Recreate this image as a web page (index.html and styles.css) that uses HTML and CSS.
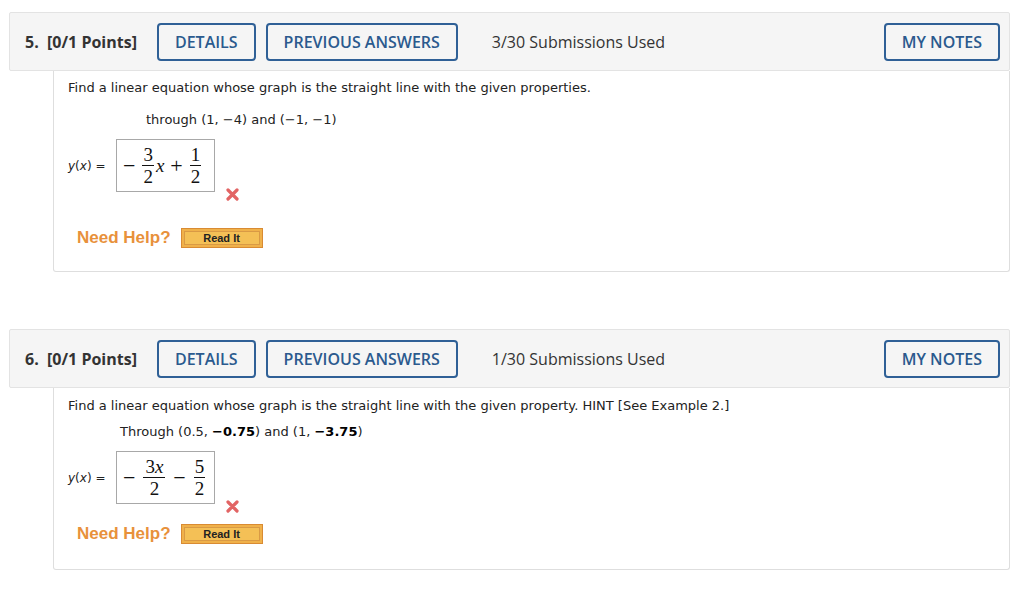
FILE: index.html
```html
<!DOCTYPE html>
<html lang="en">
  <head>
    <meta charset="UTF-8" />
    <title>Questions</title>
    <link rel="stylesheet" href="styles.css">
  </head>
  <body>
    <!-- Question 5 -->
    <div class="question">
      <div class="q-header">
        <span class="q-title">5.&nbsp; [0/1 Points]</span>
        <button class="q-btn">DETAILS</button>
        <button class="q-btn">PREVIOUS ANSWERS</button>
        <span class="q-subs">3/30 Submissions Used</span>
        <button class="q-btn notes">MY NOTES</button>
      </div>
      <div class="q-body q5">
        <p class="prompt">Find a linear equation whose graph is the straight line with the given properties.</p>
        <p class="given g5">through (1, &minus;4) and (&minus;1, &minus;1)</p>
        <div class="answer-row">
          <span class="ans-label"><i>y</i>(<i>x</i>) =</span>
          <div class="ans-box">
            <span class="op">&minus;</span>
            <span class="frac"><span class="num">3</span><span class="den">2</span></span>
            <span class="var">x</span>
            <span class="op">+</span>
            <span class="frac"><span class="num">1</span><span class="den">2</span></span>
          </div>
          <svg class="wrong" width="13" height="13" viewBox="0 0 13 13"><path d="M2 2 L11 11 M11 2 L2 11" stroke="#e26464" stroke-width="3.2" stroke-linecap="round"/></svg>
        </div>
        <div class="help">
          <span class="help-text">Need Help?</span>
          <button class="read-btn">Read It</button>
        </div>
      </div>
    </div>

    <!-- Question 6 -->
    <div class="question">
      <div class="q-header">
        <span class="q-title">6.&nbsp; [0/1 Points]</span>
        <button class="q-btn">DETAILS</button>
        <button class="q-btn">PREVIOUS ANSWERS</button>
        <span class="q-subs">1/30 Submissions Used</span>
        <button class="q-btn notes">MY NOTES</button>
      </div>
      <div class="q-body q6">
        <p class="prompt">Find a linear equation whose graph is the straight line with the given property. HINT [See Example 2.]</p>
        <p class="given g6">Through (0.5, <b>&minus;0.75</b>) and (1, <b>&minus;3.75</b>)</p>
        <div class="answer-row">
          <span class="ans-label"><i>y</i>(<i>x</i>) =</span>
          <div class="ans-box">
            <span class="op">&minus;</span>
            <span class="frac wide"><span class="num">3<i>x</i></span><span class="den">2</span></span>
            <span class="op">&minus;</span>
            <span class="frac"><span class="num">5</span><span class="den">2</span></span>
          </div>
          <svg class="wrong" width="13" height="13" viewBox="0 0 13 13"><path d="M2 2 L11 11 M11 2 L2 11" stroke="#e26464" stroke-width="3.2" stroke-linecap="round"/></svg>
        </div>
        <div class="help">
          <span class="help-text">Need Help?</span>
          <button class="read-btn">Read It</button>
        </div>
      </div>
    </div>
  </body>
</html>
```

FILE: styles.css
```css
body {
  margin: 0;
  padding: 12px 14px 0 9px;
  background: #fff;
  color: #222;
}

.question {
  width: 1001px;
}

.question + .question {
  margin-top: 57px;
}

/* Header bar with number and buttons */
.q-header {
  display: flex;
  align-items: center;
  height: 57px;
  padding: 0 9px 0 15px;
  background-color: #f5f5f5;
  border: 1px solid #e3e3e3;
  border-radius: 2px;
  font-family: "Open Sans", sans-serif;
}

.q-title {
  font-size: 16px;
  font-weight: 700;
  color: #333;
  margin-right: 20px;
}

.q-btn {
  height: 38px;
  padding: 0 16px;
  margin-right: 10px;
  background: transparent;
  border: 2px solid #2f6096;
  border-radius: 4px;
  font-family: "Open Sans", sans-serif;
  font-size: 16px;
  font-weight: 600;
  color: #2b5a8e;
}

.q-subs {
  margin-left: 24px;
  font-size: 16px;
  color: #333;
}

.q-btn.notes {
  margin-left: auto;
  margin-right: 0;
}

/* Question body */
.q-body {
  margin-left: 44px;
  padding: 0 14px;
  border: 1px solid #dedede;
  border-top: none;
  border-radius: 0 0 3px 3px;
  font-family: "DejaVu Sans", Verdana, sans-serif;
  font-size: 13px;
  color: #222;
}

.q5 {
  height: 200px;
}

.q6 {
  height: 181px;
}

.prompt {
  margin: 0;
  line-height: 16px;
}

.q5 .prompt {
  padding-top: 9px;
}

.q6 .prompt {
  padding-top: 10px;
}

.given {
  margin: 0;
  line-height: 16px;
}

.g5 {
  padding: 16px 0 0 78px;
}

.g6 {
  padding: 10px 0 0 52px;
}

.given b {
  font-weight: 600;
  color: #000;
}

.answer-row {
  display: flex;
  align-items: center;
  margin-top: 11px;
}

.ans-label {
  width: 48px;
  font-size: 12px;
}

.ans-box {
  display: flex;
  align-items: center;
  gap: 5px;
  width: 92px;
  height: 51px;
  padding-left: 5px;
  border: 1px solid #a8a8a8;
  font-family: "Liberation Serif", "Times New Roman", serif;
  font-size: 19px;
  color: #111;
}

.q6 .ans-box {
  gap: 6px;
}

.op {
  font-size: 22px;
  padding: 0 1px;
}

.frac {
  display: inline-flex;
  flex-direction: column;
  align-items: center;
  line-height: 19px;
  padding: 0 1px;
}

.frac .num {
  border-bottom: 1px solid #111;
  padding: 0 1px 1px;
}

.frac.wide .num {
  padding: 0 2px 1px;
}

.frac .den {
  padding-top: 1px;
}

.var {
  font-style: italic;
  margin-left: -4px;
}

.wrong {
  align-self: flex-end;
  margin: 0 0 -9px 11px;
}

/* Need help line */
.help {
  display: flex;
  align-items: center;
  margin: 36px 0 0 9px;
}

.q6 .help {
  margin-top: 20px;
}

.help-text {
  font-family: "Liberation Sans", Arial, sans-serif;
  font-weight: 700;
  font-size: 17px;
  color: #e8913b;
  margin-right: 10px;
}

.read-btn {
  width: 82px;
  height: 20px;
  padding: 0;
  background: #f4c056;
  border: 1px solid #d98b33;
  box-shadow: inset 0 0 0 2px #f0b14a, inset 0 0 0 3px #d99a45;
  font-family: "Liberation Sans", Arial, sans-serif;
  font-size: 11px;
  font-weight: 700;
  color: #222;
}
```
